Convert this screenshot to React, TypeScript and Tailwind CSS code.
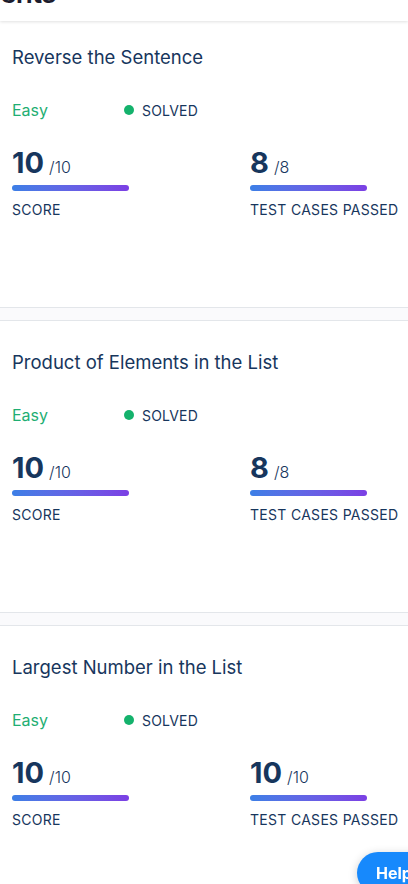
import React from 'react'

type Problem = {
  title: string
  score: number
  maxScore: number
  passed: number
  total: number
}

const problems: Problem[] = [
  { title: 'Reverse the Sentence', score: 10, maxScore: 10, passed: 8, total: 8 },
  { title: 'Product of Elements in the List', score: 10, maxScore: 10, passed: 8, total: 8 },
  { title: 'Largest Number in the List', score: 10, maxScore: 10, passed: 10, total: 10 },
]

function Stat({ value, max, label }: { value: number; max: number; label: string }) {
  return (
    <div className="flex flex-col">
      <div className="flex items-baseline h-[30px]">
        <span className="text-[29px] font-bold leading-none text-[#17365d]">{value}</span>
        <span className="ml-[5px] text-[16px] leading-none text-[#17365d] font-light">/{max}</span>
      </div>
      <div className="mt-[7px] h-[6px] w-[117px] rounded-full bg-gradient-to-r from-[#3b7fe6] to-[#7b3fe4]" />
      <div className="mt-[11px] whitespace-nowrap text-[14px] leading-4 text-[#17365d] tracking-[0.3px]">{label}</div>
    </div>
  )
}

function ProblemCard({ p, first }: { p: Problem; first?: boolean }) {
  return (
    <div
      className={
        'bg-white border-[#e3e6ea] px-3 ' +
        (first ? 'h-[287px] pt-[22px] border-b' : 'h-[293px] pt-[27px] border-y')
      }
    >
      <h2 className="text-[18.5px] leading-7 text-[#17365d]">{p.title}</h2>
      <div className="mt-[27px] flex items-center h-6">
        <span className="w-[112px] text-[16px] text-[#1fae73]">Easy</span>
        <span className="h-[10px] w-[10px] rounded-full bg-[#14b26c]" />
        <span className="ml-2 text-[14px] text-[#17365d] tracking-[0.2px]">SOLVED</span>
      </div>
      <div className="mt-[26px] grid grid-cols-[238px_1fr]">
        <Stat value={p.score} max={p.maxScore} label="SCORE" />
        <Stat value={p.passed} max={p.total} label="TEST CASES PASSED" />
      </div>
    </div>
  )
}

export default function App() {
  return (
    <div className="min-h-screen bg-[#fafafc] font-['Inter',sans-serif] relative overflow-hidden">
      <div className="h-[21px] bg-white overflow-hidden shadow-[0_1px_3px_rgba(0,0,0,0.12)] relative z-10">
        <div className="-mt-[24px] text-[28px] font-semibold leading-[26px] text-[#1c1c2e] tracking-tight">
          ents<span className="text-[10px] align-super font-normal">™</span>
        </div>
      </div>
      <div className="flex flex-col gap-[12px]">
        {problems.map((p, i) => (
          <ProblemCard key={p.title} p={p} first={i === 0} />
        ))}
      </div>
      <button className="fixed right-[-37px] bottom-[-10px] h-[42px] w-[88px] rounded-full bg-[#1789fc] pl-[19px] text-left text-[16px] font-bold text-white shadow-[0_2px_10px_rgba(0,0,0,0.2)]">
        Help
      </button>
    </div>
  )
}
